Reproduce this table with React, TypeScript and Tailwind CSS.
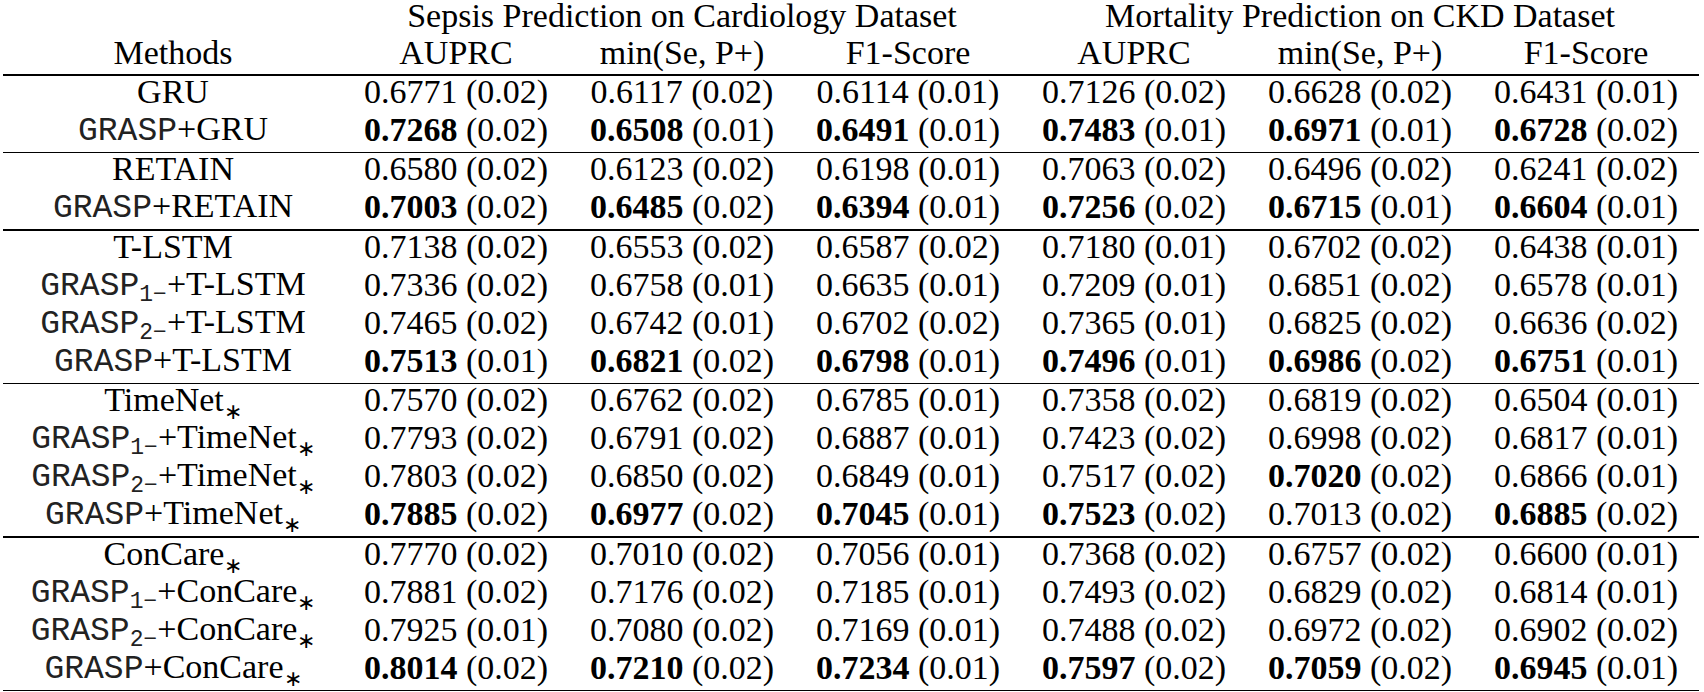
import React from "react";

type Method = { pre?: boolean; sub?: string; name: string; star?: boolean };
type Row = { m: Method; c: string[] };

const groups: Row[][] = [
  [
    { m: { name: "GRU" }, c: ["0.6771 (0.02)", "0.6117 (0.02)", "0.6114 (0.01)", "0.7126 (0.02)", "0.6628 (0.02)", "0.6431 (0.01)"] },
    { m: { pre: true, name: "GRU" }, c: ["*0.7268 (0.02)", "*0.6508 (0.01)", "*0.6491 (0.01)", "*0.7483 (0.01)", "*0.6971 (0.01)", "*0.6728 (0.02)"] },
  ],
  [
    { m: { name: "RETAIN" }, c: ["0.6580 (0.02)", "0.6123 (0.02)", "0.6198 (0.01)", "0.7063 (0.02)", "0.6496 (0.02)", "0.6241 (0.02)"] },
    { m: { pre: true, name: "RETAIN" }, c: ["*0.7003 (0.02)", "*0.6485 (0.02)", "*0.6394 (0.01)", "*0.7256 (0.02)", "*0.6715 (0.01)", "*0.6604 (0.01)"] },
  ],
  [
    { m: { name: "T-LSTM" }, c: ["0.7138 (0.02)", "0.6553 (0.02)", "0.6587 (0.02)", "0.7180 (0.01)", "0.6702 (0.02)", "0.6438 (0.01)"] },
    { m: { pre: true, sub: "1\u2212", name: "T-LSTM" }, c: ["0.7336 (0.02)", "0.6758 (0.01)", "0.6635 (0.01)", "0.7209 (0.01)", "0.6851 (0.02)", "0.6578 (0.01)"] },
    { m: { pre: true, sub: "2\u2212", name: "T-LSTM" }, c: ["0.7465 (0.02)", "0.6742 (0.01)", "0.6702 (0.02)", "0.7365 (0.01)", "0.6825 (0.02)", "0.6636 (0.02)"] },
    { m: { pre: true, name: "T-LSTM" }, c: ["*0.7513 (0.01)", "*0.6821 (0.02)", "*0.6798 (0.01)", "*0.7496 (0.01)", "*0.6986 (0.02)", "*0.6751 (0.01)"] },
  ],
  [
    { m: { name: "TimeNet", star: true }, c: ["0.7570 (0.02)", "0.6762 (0.02)", "0.6785 (0.01)", "0.7358 (0.02)", "0.6819 (0.02)", "0.6504 (0.01)"] },
    { m: { pre: true, sub: "1\u2212", name: "TimeNet", star: true }, c: ["0.7793 (0.02)", "0.6791 (0.02)", "0.6887 (0.01)", "0.7423 (0.02)", "0.6998 (0.02)", "0.6817 (0.01)"] },
    { m: { pre: true, sub: "2\u2212", name: "TimeNet", star: true }, c: ["0.7803 (0.02)", "0.6850 (0.02)", "0.6849 (0.01)", "0.7517 (0.02)", "*0.7020 (0.02)", "0.6866 (0.01)"] },
    { m: { pre: true, name: "TimeNet", star: true }, c: ["*0.7885 (0.02)", "*0.6977 (0.02)", "*0.7045 (0.01)", "*0.7523 (0.02)", "0.7013 (0.02)", "*0.6885 (0.02)"] },
  ],
  [
    { m: { name: "ConCare", star: true }, c: ["0.7770 (0.02)", "0.7010 (0.02)", "0.7056 (0.01)", "0.7368 (0.02)", "0.6757 (0.02)", "0.6600 (0.01)"] },
    { m: { pre: true, sub: "1\u2212", name: "ConCare", star: true }, c: ["0.7881 (0.02)", "0.7176 (0.02)", "0.7185 (0.01)", "0.7493 (0.02)", "0.6829 (0.02)", "0.6814 (0.01)"] },
    { m: { pre: true, sub: "2\u2212", name: "ConCare", star: true }, c: ["0.7925 (0.01)", "0.7080 (0.02)", "0.7169 (0.01)", "0.7488 (0.02)", "0.6972 (0.02)", "0.6902 (0.02)"] },
    { m: { pre: true, name: "ConCare", star: true }, c: ["*0.8014 (0.02)", "*0.7210 (0.02)", "*0.7234 (0.01)", "*0.7597 (0.02)", "*0.7059 (0.02)", "*0.6945 (0.01)"] },
  ],
];

function MethodCell({ m }: { m: Method }) {
  return (
    <span className="whitespace-nowrap font-['Liberation_Serif',serif]">
      {m.pre && (
        <span className="font-['Liberation_Mono',monospace] text-[33px] text-[#222222]">
          GRASP
          {m.sub && <sub className="relative top-[6px] text-[23px] leading-none">{m.sub}</sub>}
        </span>
      )}
      {m.pre && "+"}
      {m.name}
      {m.star && <sub className="relative top-[8px] text-[22px] leading-none">{"\u2217"}</sub>}
    </span>
  );
}

function Cell({ v }: { v: string }) {
  const bold = v.startsWith("*");
  const s = bold ? v.slice(1) : v;
  const [a, b] = s.split(" ");
  return (
    <span className="whitespace-nowrap font-['Liberation_Serif',serif]">
      <span className={bold ? "font-bold" : ""}>{a}</span> {b}
    </span>
  );
}

function Line() {
  return <div className="h-[1.5px] bg-black" />;
}

export default function App() {
  return (
    <div className="w-[1704px] h-[692px] bg-white text-black overflow-hidden font-['Liberation_Serif',serif] text-[34px]">
      <div className="ml-[3px] w-[1696px]">
        <div className="flex h-[34px] items-center leading-none pb-[3px]">
          <div className="w-[340px]" />
          <div className="w-[678px] text-center">Sepsis Prediction on Cardiology Dataset</div>
          <div className="w-[678px] text-center">Mortality Prediction on CKD Dataset</div>
        </div>
        <div className="flex h-[40px] items-center leading-none pb-[2px]">
          <div className="w-[340px] text-center">Methods</div>
          {["AUPRC", "min(Se, P+)", "F1-Score", "AUPRC", "min(Se, P+)", "F1-Score"].map((h, i) => (
            <div key={i} className="w-[226px] text-center">{h}</div>
          ))}
        </div>
        <Line />
        {groups.map((g, gi) => (
          <div key={gi}>
            {g.map((r, ri) => (
              <div key={ri} className="flex h-[38px] items-center leading-none pb-[6px]">
                <div className="w-[340px] text-center">
                  <MethodCell m={r.m} />
                </div>
                {r.c.map((v, ci) => (
                  <div key={ci} className="w-[226px] text-center">
                    <Cell v={v} />
                  </div>
                ))}
              </div>
            ))}
            <Line />
          </div>
        ))}
      </div>
    </div>
  );
}
